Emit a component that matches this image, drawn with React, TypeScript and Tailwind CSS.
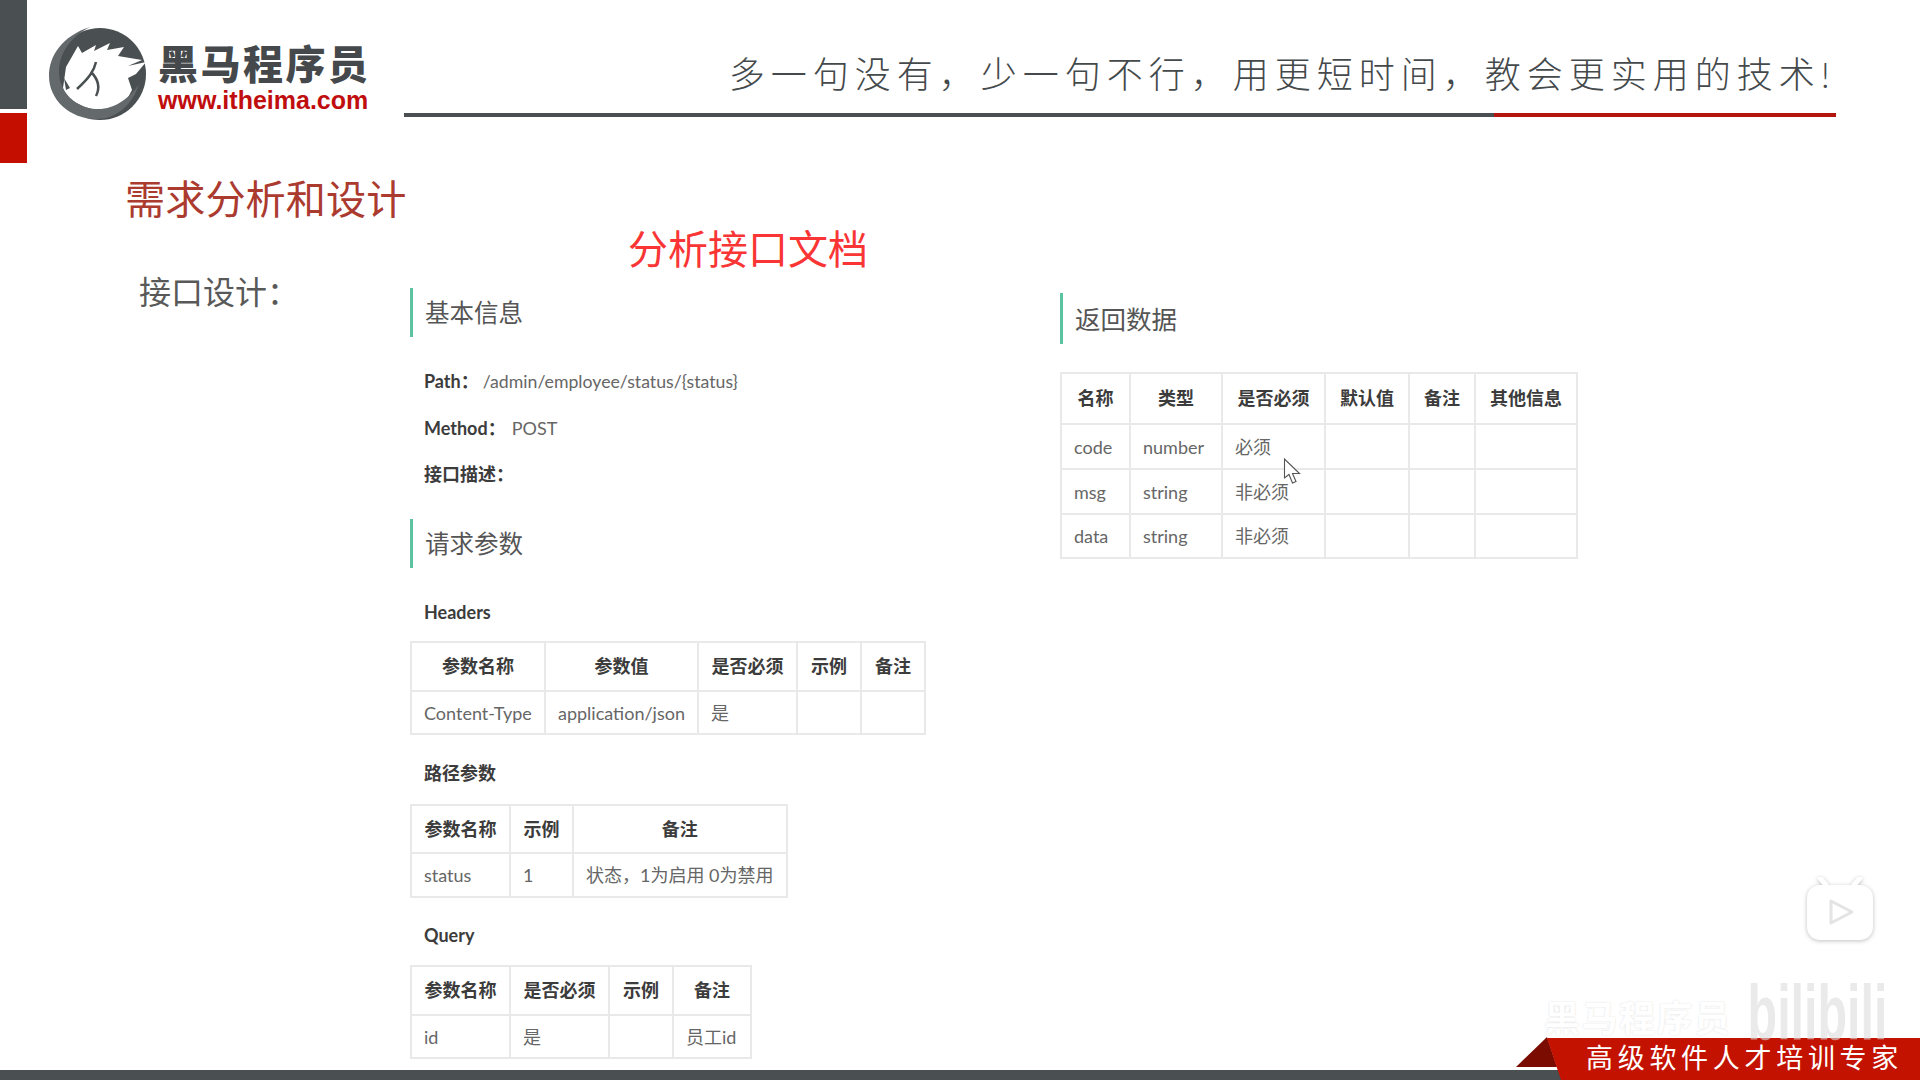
import React from 'react';

type Cell = string;

interface DocTableProps {
  widths: string[];
  rowHeights: string[];
  head: Cell[];
  rows: Cell[][];
}

const DocTable = ({ widths, rowHeights, head, rows }: DocTableProps) => (
  <table className="border-collapse table-fixed text-[18px] text-[#666]">
    <thead>
      <tr className={rowHeights[0]}>
        {head.map((h, i) => (
          <th key={i} className={`${widths[i]} border-2 border-[#e9e9e9] p-0 text-center font-bold text-[#3c3c3c]`}>
            {h}
          </th>
        ))}
      </tr>
    </thead>
    <tbody>
      {rows.map((row, r) => (
        <tr key={r} className={rowHeights[r + 1]}>
          {row.map((c, i) => (
            <td key={i} className="border-2 border-[#e9e9e9] px-[12px] pt-[1px] pb-0 whitespace-nowrap">
              {c}
            </td>
          ))}
        </tr>
      ))}
    </tbody>
  </table>
);

const SectionTitle = ({ children, tall }: { children: React.ReactNode; tall?: boolean }) => (
  <div
    className={`flex items-center border-l-[3px] border-[#5cc3a0] pl-[12px] pt-[2px] text-[#555] ${
      tall ? 'h-[51px] text-[25.5px]' : 'h-[49px] text-[24.5px]'
    }`}
  >
    {children}
  </div>
);

const Logo = () => (
  <div className="flex items-start">
    <svg viewBox="48 26 102 94" className="mt-[26px] h-[94px] w-[102px] shrink-0">
      <circle cx="100" cy="74" r="46" fill="#4a4f51" />
      <path
        d="M63 88 L66 67 L78 46 L82 53 L96 45 L94 51 L110 43 L107 50 L124 47 L118 56 L142 60 L128 66 L146 62 L136 74 L128 78 L132 90 L126 101 C116 110 100 112 88 108 C76 104 66 98 63 88Z"
        fill="#fff"
      />
      <path d="M96 62 C94 71 89 78 77 89 M91 72 C97 78 101 86 96 96" fill="none" stroke="#4a4f51" strokeWidth="2.5" />
      <path d="M64 78 L70 88 L66 90Z" fill="#4a4f51" />
      <path
        d="M90 27 C62 36 49 56 49 76 C49 100 70 119 96 119 C116 119 132 106 139 84 C130 98 114 110 96 109 C76 108 59 92 59 72 C59 52 72 36 90 27Z"
        fill="#64696c"
      />
    </svg>
    <div className="ml-[8px] mt-[45px] w-[216px] whitespace-nowrap">
      <div className="text-[40px] leading-[38px] font-black tracking-[2.5px] text-[#45494b]">黑马程序员</div>
      <div className="mt-[4px] font-['Liberation_Sans',sans-serif] text-[25px] leading-[26px] font-bold text-[#c00d0d]">
        www.itheima.com
      </div>
    </div>
  </div>
);

const Cursor = () => (
  <svg viewBox="0 0 20 27" className="absolute left-[1283px] top-[458px] h-[27px] w-[20px]">
    <path d="M1.5 1 L1.5 20 L6 16.5 L9.5 25 L13 23.5 L9.5 15.5 L16.5 15.5Z" fill="#fff" stroke="#555" strokeWidth="1.1" />
  </svg>
);

const App = () => {
  return (
    <div className="relative flex h-[1080px] w-[1920px] flex-col overflow-hidden bg-white font-['Lato','Noto_Sans_CJK_SC',sans-serif]">
      <header className="flex h-[163px] shrink-0">
        <div className="w-[27px] shrink-0">
          <div className="h-[109px] bg-[#4a4f51]" />
          <div className="mt-[4px] h-[50px] bg-[#c40f00]" />
        </div>
        <div className="ml-[21px] w-[356px] shrink-0">
          <Logo />
        </div>
        <div className="w-[1432px] shrink-0">
          <div className="flex h-[113px] items-start justify-end pt-[51px]">
            <span className="whitespace-nowrap text-[36px] leading-[46px] font-light tracking-[6px] text-[#44494b]">
              多一句没有，少一句不行，用更短时间，教会更实用的技术!
            </span>
          </div>
          <div className="flex h-[4px]">
            <div className="w-[1090px] bg-[#4a4f51]" />
            <div className="flex-1 bg-[#b3160c]" />
          </div>
        </div>
      </header>

      <main className="flex-1 pl-[125px]">
        <h1 className="mt-[12px] text-[40.2px] leading-[48px] font-normal text-[#ab3a2f]">需求分析和设计</h1>
        <div className="mt-[1px] flex">
          <div className="w-[285px] shrink-0 pl-[14px] pt-[47px] text-[32px] leading-[42px] text-[#595959]">接口设计：</div>

          <div className="w-[650px] shrink-0">
            <div className="mt-[1px] pl-[218px] text-[40px] leading-[48px] text-[#f93535]">分析接口文档</div>
            <div className="mt-[15px]">
              <SectionTitle>基本信息</SectionTitle>
              <div className="mt-[32px] flex flex-col gap-[22px] pl-[14px] text-[18px] leading-[24px] text-[#666]">
                <div>
                  <span className="font-bold text-[#3c3c3c]">Path：</span>
                  <span className="ml-[4px] text-[17.7px]">/admin/employee/status/{'{status}'}</span>
                </div>
                <div>
                  <span className="font-bold text-[#3c3c3c]">Method：</span>
                  <span className="ml-[6px]">POST</span>
                </div>
                <div className="font-bold text-[#3c3c3c]">接口描述：</div>
              </div>
              <div className="mt-[33px]">
                <SectionTitle>请求参数</SectionTitle>
              </div>
              <div className="mt-[32px] mb-[17px] pl-[14px] text-[18px] leading-[24px] font-bold text-[#3c3c3c]">Headers</div>
              <DocTable
                widths={['w-[134px]', 'w-[153px]', 'w-[99px]', 'w-[64px]', 'w-[64px]']}
                rowHeights={['h-[49px]', 'h-[43px]']}
                head={['参数名称', '参数值', '是否必须', '示例', '备注']}
                rows={[['Content-Type', 'application/json', '是', '', '']]}
              />
              <div className="mt-[26px] mb-[19px] pl-[14px] text-[18px] leading-[24px] font-bold text-[#3c3c3c]">路径参数</div>
              <DocTable
                widths={['w-[99px]', 'w-[63px]', 'w-[210px]']}
                rowHeights={['h-[48px]', 'h-[44px]']}
                head={['参数名称', '示例', '备注']}
                rows={[['status', '1', '状态，1为启用 0为禁用']]}
              />
              <div className="mt-[25px] mb-[18px] pl-[14px] text-[18px] leading-[24px] font-bold text-[#3c3c3c]">Query</div>
              <DocTable
                widths={['w-[99px]', 'w-[99px]', 'w-[64px]', 'w-[78px]']}
                rowHeights={['h-[49px]', 'h-[43px]']}
                head={['参数名称', '是否必须', '示例', '备注']}
                rows={[['id', '是', '', '员工id']]}
              />
            </div>
          </div>

          <div className="pt-[69px]">
            <SectionTitle tall>返回数据</SectionTitle>
            <div className="mt-[28px]">
              <DocTable
                widths={['w-[69px]', 'w-[92px]', 'w-[103px]', 'w-[84px]', 'w-[66px]', 'w-[102px]']}
                rowHeights={['h-[51px]', 'h-[45px]', 'h-[45px]', 'h-[44px]']}
                head={['名称', '类型', '是否必须', '默认值', '备注', '其他信息']}
                rows={[
                  ['code', 'number', '必须', '', '', ''],
                  ['msg', 'string', '非必须', '', '', ''],
                  ['data', 'string', '非必须', '', '', ''],
                ]}
              />
            </div>
          </div>
        </div>
      </main>

      <footer className="h-[10px] shrink-0 bg-[#4a4f51]" />

      {/* overlays: cursor, video watermarks, corner banner */}
      <Cursor />

      <svg viewBox="0 0 68 64" className="absolute left-[1806px] top-[877px] h-[64px] w-[68px] drop-shadow-[0_1px_2px_rgba(0,0,0,0.25)]">
        <path d="M20 8 L14 1 M48 8 L54 1" stroke="#fff" strokeWidth="5" strokeLinecap="round" />
        <rect x="1" y="8" width="66" height="55" rx="13" fill="#fff" />
        <path d="M25 24 L25 46 L46 35Z" fill="#fff" stroke="#e4e4e4" strokeWidth="3" strokeLinejoin="round" />
      </svg>

      <div className="absolute left-[1544px] top-[998px] text-[36px] leading-[40px] font-bold tracking-[1.5px] text-white [text-shadow:0_0_2px_rgba(0,0,0,0.14)]">
        黑马程序员
      </div>

      <svg viewBox="0 0 42 30" className="absolute left-[1516px] top-[1037px] h-[30px] w-[42px]">
        <path d="M0 30 L31 0 L41 30Z" fill="#7a0c02" />
      </svg>
      <div className="absolute bottom-0 right-0 flex h-[42px] w-[373px] items-center bg-[#c41200] pb-[3px] pl-[39px] [clip-path:polygon(0_0,100%_0,100%_100%,14px_100%)]">
        <span className="whitespace-nowrap text-[27px] leading-[36px] font-normal tracking-[4.7px] text-white">高级软件人才培训专家</span>
      </div>

      <div className="absolute right-[33px] top-[983px] origin-right scale-x-[0.62] font-['Liberation_Sans',sans-serif] text-[78px] leading-[60px] font-bold text-[#dcdcdc]/60">
        bilibili
      </div>
    </div>
  );
};

export default App;
